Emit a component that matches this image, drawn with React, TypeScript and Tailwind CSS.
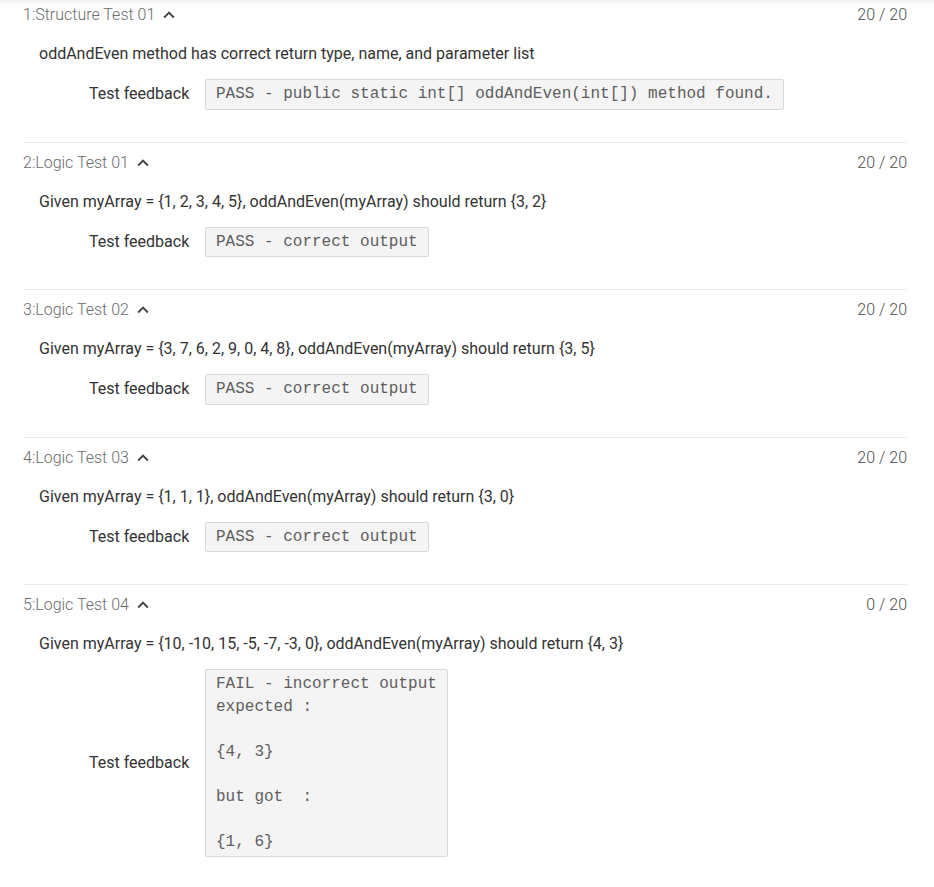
import React from 'react'

type Test = {
  id: number
  name: string
  score: string
  description: string
  feedback: string
}

const tests: Test[] = [
  {
    id: 1,
    name: 'Structure Test 01',
    score: '20 / 20',
    description: 'oddAndEven method has correct return type, name, and parameter list',
    feedback: 'PASS - public static int[] oddAndEven(int[]) method found.',
  },
  {
    id: 2,
    name: 'Logic Test 01',
    score: '20 / 20',
    description: 'Given myArray = {1, 2, 3, 4, 5}, oddAndEven(myArray) should return {3, 2}',
    feedback: 'PASS - correct output',
  },
  {
    id: 3,
    name: 'Logic Test 02',
    score: '20 / 20',
    description: 'Given myArray = {3, 7, 6, 2, 9, 0, 4, 8}, oddAndEven(myArray) should return {3, 5}',
    feedback: 'PASS - correct output',
  },
  {
    id: 4,
    name: 'Logic Test 03',
    score: '20 / 20',
    description: 'Given myArray = {1, 1, 1}, oddAndEven(myArray) should return {3, 0}',
    feedback: 'PASS - correct output',
  },
  {
    id: 5,
    name: 'Logic Test 04',
    score: '0 / 20',
    description: 'Given myArray = {10, -10, 15, -5, -7, -3, 0}, oddAndEven(myArray) should return {4, 3}',
    feedback: 'FAIL - incorrect output\nexpected :\n\n{4, 3}\n\nbut got  :\n\n{1, 6}',
  },
]

function ExpandLess() {
  return (
    <svg width="22" height="22" viewBox="0 0 24 24" className="ml-[3px] shrink-0" fill="#444">
      <path d="M7.41 15.41L12 10.83l4.59 4.58L18 14l-6-6-6 6z" />
    </svg>
  )
}

function TestSection({ test, first }: { test: Test; first: boolean }) {
  return (
    <div className={first ? 'pt-[3px] pb-[32px]' : 'border-t border-[#ebebeb] pt-[8px] pb-[32px]'}>
      <div className="flex h-6 items-center justify-between">
        <div className="flex items-center text-[16px] font-light text-[#6b6b6b]">
          <span>{test.id}:{test.name}</span>
          <ExpandLess />
        </div>
        <div className="text-[16px] font-light text-[#4d4d4d]">{test.score}</div>
      </div>

      <div className="mt-[15px] pl-4 text-[16px] leading-6 text-[#333]">{test.description}</div>

      <div className="mt-[13px] flex items-center pl-[66px]">
        <div className="w-[116px] shrink-0 whitespace-nowrap text-[16px] text-[#333]">Test feedback</div>
        {/* courier isn't always around, liberation mono keeps the same width */}
        <pre
          className="whitespace-pre rounded-[2px] border border-[#d9d9d9] bg-[#f4f4f4] px-[10px] py-[3px] text-[16px] leading-[22.5px] text-[#5e5e5e]"
          style={{ fontFamily: '"Courier New", "Liberation Mono", monospace' }}
        >
          {test.feedback}
        </pre>
      </div>
    </div>
  )
}

export default function App() {
  return (
    <div
      className="min-h-[887px] w-[934px] bg-white shadow-[inset_0_5px_5px_-3px_rgba(0,0,0,0.07)]"
      style={{ fontFamily: 'Roboto, "Liberation Sans", sans-serif' }}
    >
      <div className="ml-[23px] w-[884px]">
        {tests.map((t, i) => (
          <TestSection key={t.id} test={t} first={i === 0} />
        ))}
      </div>
    </div>
  )
}
